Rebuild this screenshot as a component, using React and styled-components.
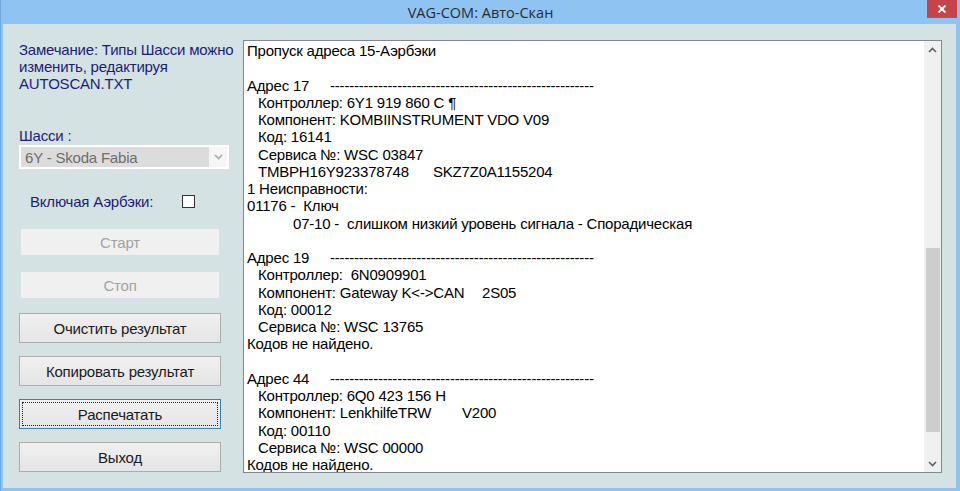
import React from "react";
import styled, { createGlobalStyle } from "styled-components";

const Global = createGlobalStyle`
  html, body { margin: 0; padding: 0; }
  body { width: 960px; height: 491px; overflow: hidden; background: #8ec3f2; }
  #root { height: 100%; }
`;

const Window = styled.div`
  width: 960px;
  height: 491px;
  display: flex;
  flex-direction: column;
  background: #8ec3f2;
  box-sizing: border-box;
  border-left: 1px solid #6fa8dc;
`;

const TitleBar = styled.div`
  height: 24px;
  flex: none;
  display: flex;
  align-items: center;
  justify-content: center;
  position: relative;
  font-family: "Open Sans", "Noto Sans", sans-serif;
  font-size: 14.5px;
  color: #2b2b2b;
`;

const CloseBtn = styled.div`
  position: absolute;
  right: 3px;
  top: 0;
  width: 30px;
  height: 18px;
  background: #c7434a;
  display: flex;
  align-items: center;
  justify-content: center;
`;

const Client = styled.div`
  flex: 1;
  margin: 0 4px 3px 2px;
  background: #d4e2e3;
  display: flex;
  padding: 16px 14px 15px 16px;
  gap: 14px;
  min-height: 0;
  font-family: "Liberation Sans", Arial, sans-serif;
  font-size: 15px;
  letter-spacing: -0.2px;
`;

const Left = styled.div`
  width: 210px;
  flex: none;
  display: flex;
  flex-direction: column;
`;

const NavyText = styled.div`
  color: #1d1d78;
  line-height: 17px;
  white-space: nowrap;
  margin-top: ${(p) => p.$mt || 0}px;
`;

const Combo = styled.div`
  margin-top: 1px;
  height: 24px;
  box-sizing: border-box;
  border: 2px solid #ffffff;
  display: flex;
  background: #f6f6f6;
`;

const ComboValue = styled.div`
  flex: 1;
  background: #dcdcdc;
  color: #6d6d6d;
  display: flex;
  align-items: center;
  padding-left: 4px;
`;

const ComboArrow = styled.div`
  width: 18px;
  display: flex;
  align-items: center;
  justify-content: center;
`;

const CheckRow = styled.div`
  margin-top: 24px;
  display: flex;
  align-items: center;
  height: 17px;
  padding-left: 11px;
  color: #1d1d78;
`;

const CheckLabel = styled.span`
  width: 152px;
`;

const CheckBox = styled.span`
  width: 13px;
  height: 13px;
  box-sizing: border-box;
  border: 1px solid #333333;
  background: #ffffff;
`;

const Buttons = styled.div`
  margin-top: 17px;
  width: 202px;
  display: flex;
  flex-direction: column;
  gap: 13px;
`;

const Button = styled.div`
  height: 30px;
  box-sizing: border-box;
  display: flex;
  align-items: center;
  justify-content: center;
  position: relative;
  color: ${(p) => (p.$disabled ? "#a3a3a3" : "#1a1a1a")};
  border: ${(p) =>
    p.$disabled ? "2px solid #d4e2e3" : p.$focus ? "1px solid #3c7fb1" : "1px solid #acacac"};
  background: ${(p) =>
    p.$disabled ? "#f0f0f0" : "linear-gradient(#f0f0f0, #e5e5e5)"};
`;

const FocusRect = styled.div`
  position: absolute;
  inset: 2px;
  border: 1px dotted #222;
`;

const TextBox = styled.div`
  flex: 1;
  border: 1px solid #828790;
  background: #ffffff;
  display: flex;
  min-width: 0;
`;

const TextArea = styled.div`
  flex: 1;
  padding: 1px 0 0 3px;
  color: #000;
  line-height: 17.25px;
  overflow: hidden;
`;

const Line = styled.div`
  height: 17.25px;
  white-space: pre;
  padding-left: ${(p) => p.$indent || 0}px;
`;

const Col = styled.span`
  display: inline-block;
  width: ${(p) => p.$w}px;
`;

const ScrollBar = styled.div`
  width: 17px;
  flex: none;
  background: #f0f0f0;
  display: flex;
  flex-direction: column;
  align-items: center;
`;

const ScrollArrow = styled.div`
  height: 17px;
  width: 17px;
  display: flex;
  align-items: center;
  justify-content: center;
`;

const ScrollTrack = styled.div`
  flex: 1;
  width: 100%;
  display: flex;
  flex-direction: column;
  align-items: center;
`;

const Thumb = styled.div`
  margin-top: 190px;
  width: 14px;
  height: 184px;
  background: #cdcdcd;
`;

const Chevron = ({ up, color = "#606060" }) => (
  <svg width="9" height="6" viewBox="0 0 9 6">
    <path
      d={up ? "M1 5 L4.5 1.5 L8 5" : "M1 1 L4.5 4.5 L8 1"}
      fill="none"
      stroke={color}
      strokeWidth="1.6"
    />
  </svg>
);

const dashes = "-".repeat(55);

export default function App() {
  return (
    <>
      <Global />
      <Window>
        <TitleBar>
          VAG-COM: Авто-Скан
          <CloseBtn>
            <svg width="10" height="10" viewBox="0 0 10 10">
              <path d="M1.5 1.5 L8.5 8.5 M8.5 1.5 L1.5 8.5" stroke="#fff" strokeWidth="1.8" />
            </svg>
          </CloseBtn>
        </TitleBar>
        <Client>
          <Left>
            <NavyText $mt={1}>
              Замечание: Типы Шасси можно
              <br />
              изменить, редактируя
              <br />
              AUTOSCAN.TXT
            </NavyText>
            <NavyText $mt={35}>Шасси :</NavyText>
            <Combo>
              <ComboValue>6Y - Skoda Fabia</ComboValue>
              <ComboArrow>
                <Chevron color="#a8a8a8" />
              </ComboArrow>
            </Combo>
            <CheckRow>
              <CheckLabel>Включая Аэрбэки:</CheckLabel>
              <CheckBox />
            </CheckRow>
            <Buttons>
              <Button $disabled>Старт</Button>
              <Button $disabled>Стоп</Button>
              <Button>Очистить результат</Button>
              <Button>Копировать результат</Button>
              <Button $focus>
                <FocusRect />
                Распечатать
              </Button>
              <Button>Выход</Button>
            </Buttons>
          </Left>
          <TextBox>
            <TextArea>
              <Line>Пропуск адреса 15-Аэрбэки</Line>
              <Line> </Line>
              <Line>
                <Col $w={83}>Адрес 17</Col>
                {dashes}
              </Line>
              <Line $indent={11}>Контроллер: 6Y1 919 860 C ¶</Line>
              <Line $indent={11}>Компонент: KOMBIINSTRUMENT VDO V09</Line>
              <Line $indent={11}>Код: 16141</Line>
              <Line $indent={11}>Сервиса №: WSC 03847</Line>
              <Line $indent={11}>
                <Col $w={175}>TMBPH16Y923378748</Col>SKZ7Z0A1155204
              </Line>
              <Line>1 Неисправности:</Line>
              <Line>01176 -  Ключ</Line>
              <Line $indent={46}>07-10 -  слишком низкий уровень сигнала - Спорадическая</Line>
              <Line> </Line>
              <Line>
                <Col $w={83}>Адрес 19</Col>
                {dashes}
              </Line>
              <Line $indent={11}>Контроллер:  6N0909901</Line>
              <Line $indent={11}>
                <Col $w={224}>Компонент: Gateway K{"<->"}CAN</Col>2S05
              </Line>
              <Line $indent={11}>Код: 00012</Line>
              <Line $indent={11}>Сервиса №: WSC 13765</Line>
              <Line>Кодов не найдено.</Line>
              <Line> </Line>
              <Line>
                <Col $w={83}>Адрес 44</Col>
                {dashes}
              </Line>
              <Line $indent={11}>Контроллер: 6Q0 423 156 H</Line>
              <Line $indent={11}>
                <Col $w={204}>Компонент: LenkhilfeTRW</Col>V200
              </Line>
              <Line $indent={11}>Код: 00110</Line>
              <Line $indent={11}>Сервиса №: WSC 00000</Line>
              <Line>Кодов не найдено.</Line>
            </TextArea>
            <ScrollBar>
              <ScrollArrow>
                <Chevron up />
              </ScrollArrow>
              <ScrollTrack>
                <Thumb />
              </ScrollTrack>
              <ScrollArrow>
                <Chevron />
              </ScrollArrow>
            </ScrollBar>
          </TextBox>
        </Client>
      </Window>
    </>
  );
}
